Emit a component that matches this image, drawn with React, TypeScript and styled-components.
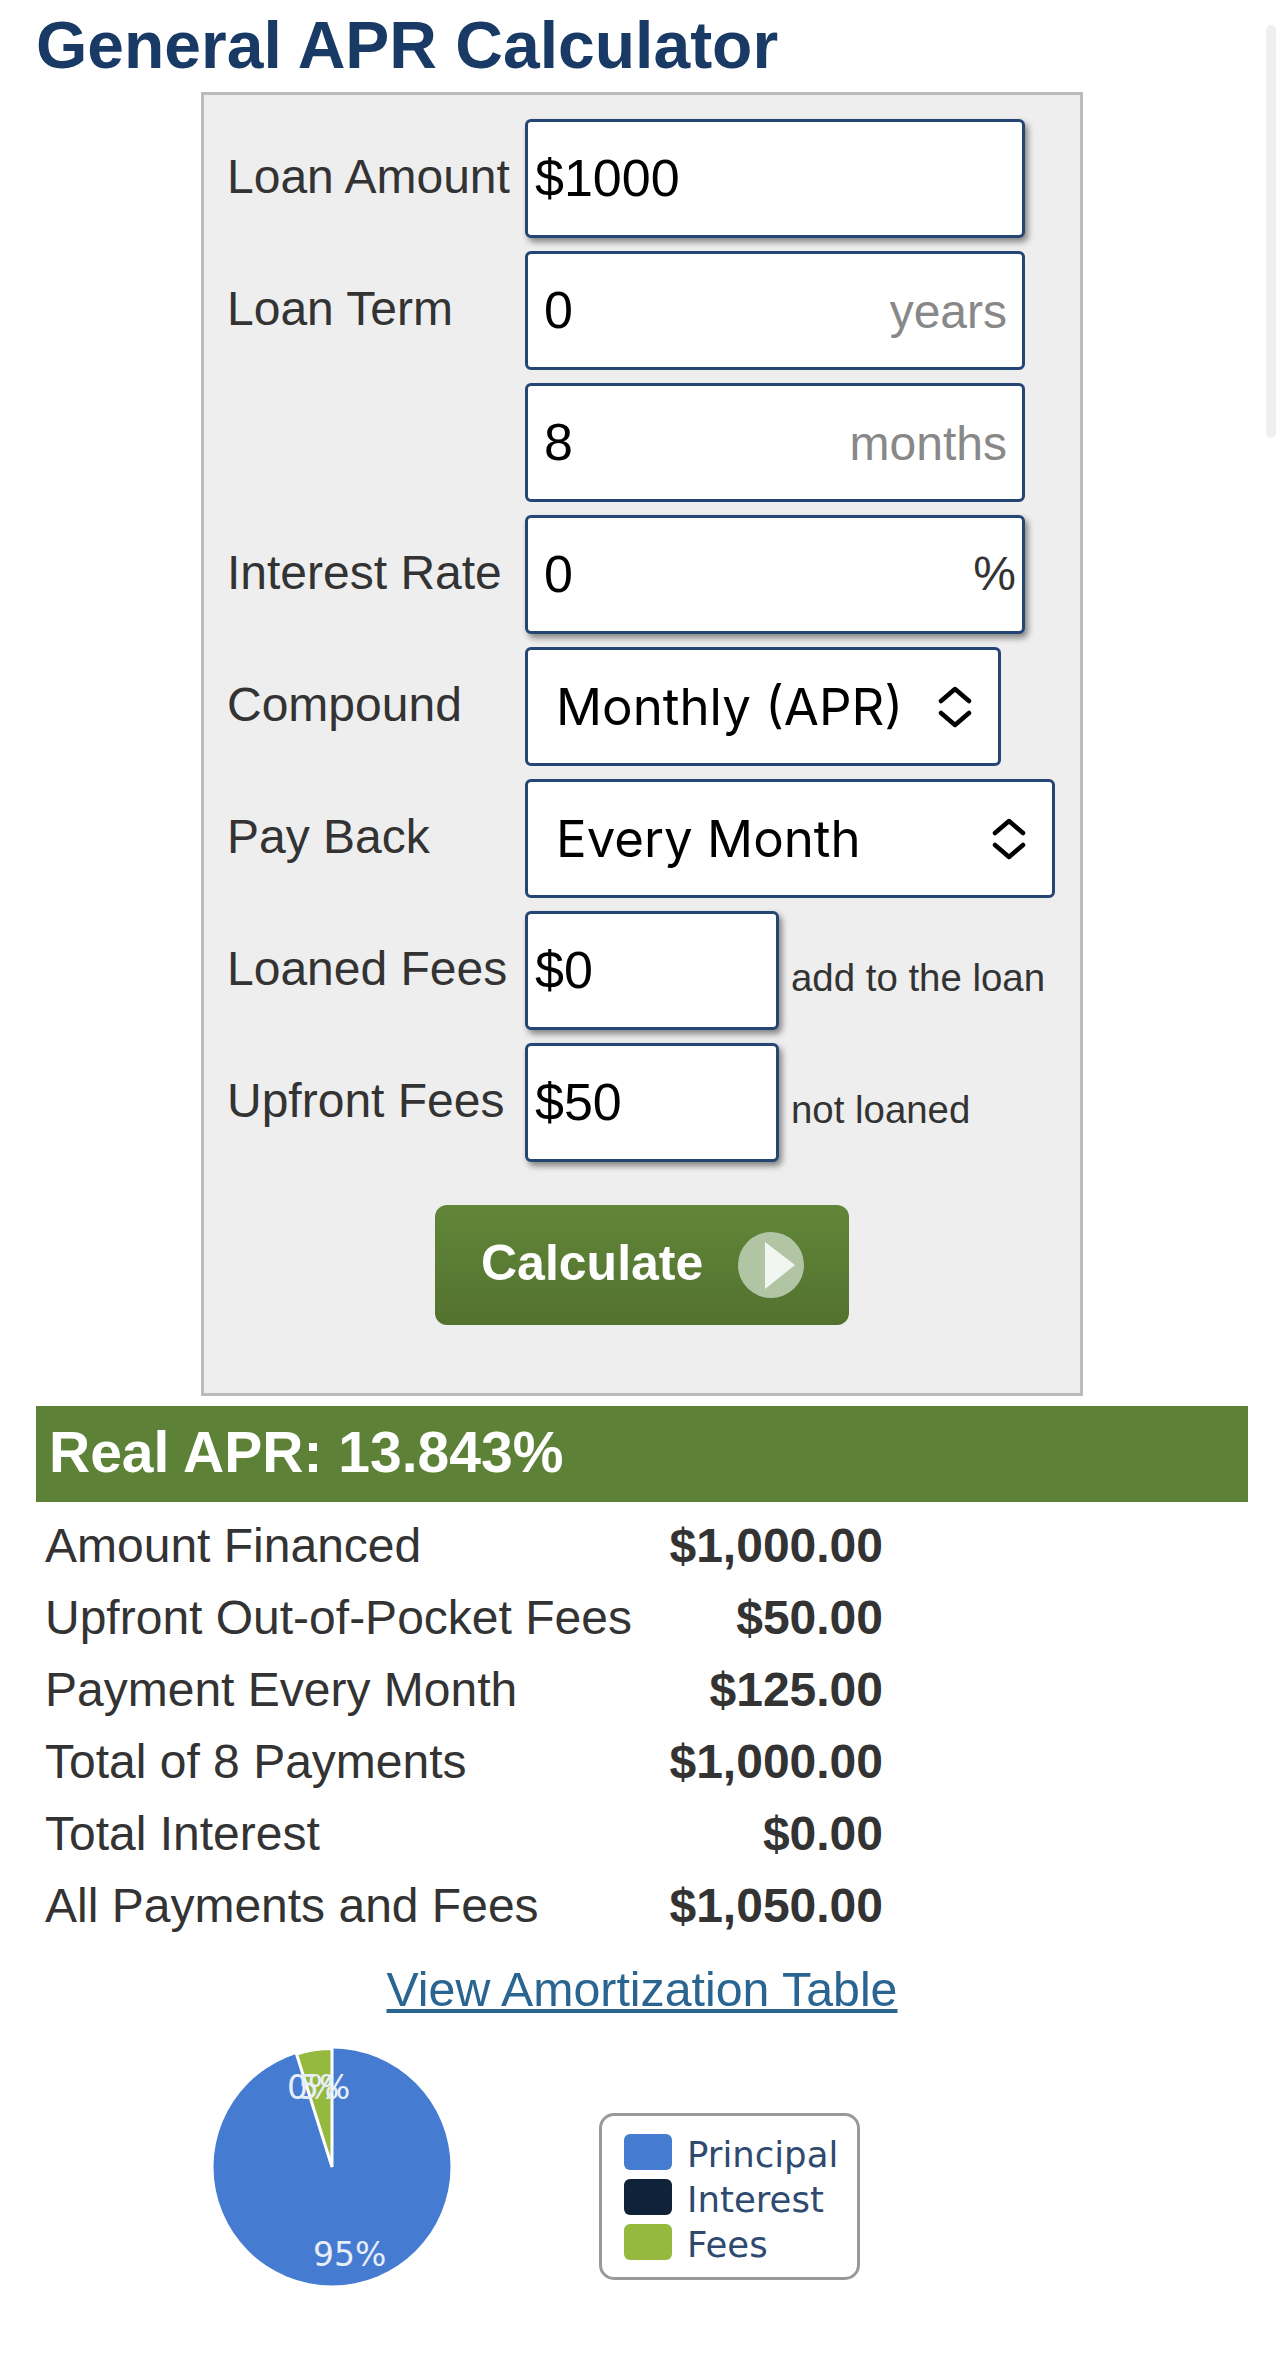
import styled, { createGlobalStyle } from "styled-components";

const GlobalStyle = createGlobalStyle`
  html, body {
    margin: 0;
    padding: 0;
    background: #fff;
    overflow: hidden;
  }
  body {
    font-family: "Liberation Sans", Arial, sans-serif;
    color: #333;
  }
`;

const PageWrap = styled.div`
  position: relative;
  width: 1284px;
  height: 2358px;
  padding: 0 36px;
  box-sizing: border-box;
  overflow: hidden;
`;

const ScrollThumb = styled.div`
  position: absolute;
  top: 25px;
  right: 8px;
  width: 10px;
  height: 413px;
  border-radius: 5px;
  background: #efefef;
`;

const Title = styled.h1`
  margin: 0;
  height: 92px;
  line-height: 90px;
  font-size: 66px;
  font-weight: 700;
  color: #1a3a66;
  white-space: nowrap;
`;

const Panel = styled.div`
  width: 882px;
  height: 1304px;
  margin: 0 0 0 165px;
  box-sizing: border-box;
  padding: 24px 0 0 23px;
  background: #eee;
  border: 3px solid #bbb;
`;

const FormRows = styled.div`
  display: flex;
  flex-direction: column;
  gap: 13px;
`;

const Row = styled.div`
  display: flex;
  align-items: center;
  height: 119px;
`;

const Label = styled.div`
  width: 298px;
  margin-top: -3px;
  flex: none;
  font-size: 48px;
  line-height: 60px;
  color: #333;
`;

const Field = styled.div<{ $w: number; $shadow?: boolean }>`
  width: ${(p) => p.$w}px;
  height: 119px;
  box-sizing: border-box;
  flex: none;
  display: flex;
  align-items: center;
  justify-content: space-between;
  padding: 0 7px 2px 7px;
  background: #fff;
  border: 3px solid #254574;
  border-radius: 6px;
  font-size: 52px;
  color: #000;
  box-shadow: ${(p) => (p.$shadow ? "3px 4px 6px rgba(0, 0, 0, 0.45)" : "none")};
`;

const PlainNumber = styled.span`
  margin-left: 9px;
`;

const Suffix = styled.span<{ $dark?: boolean }>`
  font-size: 48px;
  color: ${(p) => (p.$dark ? "#333" : "#888")};
  margin-right: ${(p) => (p.$dark ? "-1px" : "8px")};
  padding-top: ${(p) => (p.$dark ? "0" : "4px")};
`;

const SelectBox = styled.div<{ $w: number }>`
  width: ${(p) => p.$w}px;
  height: 119px;
  box-sizing: border-box;
  flex: none;
  display: flex;
  align-items: center;
  justify-content: space-between;
  padding: 0 26px 0 28px;
  background: #fff;
  border: 3px solid #254574;
  border-radius: 6px;
  font-family: Inter, "Liberation Sans", sans-serif;
  font-size: 51px;
  color: #000;
`;

const Chevrons = styled.svg`
  width: 34px;
  height: 42px;
  flex: none;
`;

const Hint = styled.div`
  margin-left: 12px;
  padding-top: 14px;
  font-size: 38.4px;
  color: #333;
  white-space: nowrap;
`;

const ButtonRow = styled.div`
  display: flex;
  padding: 43px 0 0 208px;
`;

const CalcButton = styled.div`
  width: 414px;
  height: 120px;
  box-sizing: border-box;
  display: flex;
  align-items: center;
  padding-left: 46px;
  border-radius: 12px;
  background: linear-gradient(#618638, #53722f);
  color: #fff;
  font-size: 50px;
  font-weight: 700;
`;

const CalcLabel = styled.span`
  margin-top: -5px;
`;

const PlayIcon = styled.svg`
  width: 66px;
  height: 66px;
  margin-left: 35px;
  flex: none;
`;

const ResultBar = styled.div`
  height: 96px;
  margin-top: 10px;
  padding-left: 13px;
  background: #5d8136;
  color: #fff;
  font-size: 57px;
  font-weight: 700;
  line-height: 92px;
`;

const ResultTable = styled.div`
  width: 838px;
  margin-top: 8px;
  padding-left: 9px;
`;

const ResultRow = styled.div`
  display: flex;
  justify-content: space-between;
  height: 72px;
  line-height: 72px;
  font-size: 48px;
  color: #333;
`;

const Amount = styled.span`
  font-weight: 700;
`;

const LinkRow = styled.div`
  text-align: center;
  margin-top: 11px;
  height: 72px;
  line-height: 72px;
`;

const TableLink = styled.a`
  font-size: 48.3px;
  color: #2a6592;
  text-decoration: underline;
`;

const ChartRow = styled.div`
  display: flex;
  align-items: flex-start;
  margin-top: 15px;
`;

const PieChart = styled.svg`
  width: 320px;
  height: 260px;
  margin-left: 136px;
  flex: none;
`;

const PieLabel = styled.text`
  font-family: "DejaVu Sans", sans-serif;
  font-size: 33px;
  fill: #e8eef8;
`;

const Legend = styled.div`
  margin: 73px 0 0 107px;
  width: 261px;
  height: 167px;
  box-sizing: border-box;
  padding: 18px 0 0 22px;
  display: flex;
  flex-direction: column;
  gap: 9px;
  border: 3px solid #999;
  border-radius: 15px;
`;

const LegendItem = styled.div`
  display: flex;
  align-items: center;
  gap: 15px;
  height: 36px;
  font-family: "DejaVu Sans", sans-serif;
  font-size: 35.5px;
  color: #2f4a70;
`;

const LegendName = styled.span`
  padding-top: 5px;
`;

const Swatch = styled.span<{ $color: string }>`
  width: 48px;
  height: 36px;
  border-radius: 6px;
  background: ${(p) => p.$color};
  flex: none;
`;

const results = [
  ["Amount Financed", "$1,000.00"],
  ["Upfront Out-of-Pocket Fees", "$50.00"],
  ["Payment Every Month", "$125.00"],
  ["Total of 8 Payments", "$1,000.00"],
  ["Total Interest", "$0.00"],
  ["All Payments and Fees", "$1,050.00"],
];

const legend = [
  ["Principal", "#467bd2"],
  ["Interest", "#10223a"],
  ["Fees", "#95b93f"],
];

const SelectArrows = () => (
  <Chevrons viewBox="0 0 34 42" fill="none" stroke="#000" strokeWidth="4.5" strokeLinecap="round" strokeLinejoin="round">
    <path d="M3 15 L17 3 L31 15" />
    <path d="M3 27 L17 39 L31 27" />
  </Chevrons>
);

export default function App() {
  return (
    <PageWrap>
      <GlobalStyle />
      <ScrollThumb />
      <Title>General APR Calculator</Title>
      <Panel>
        <FormRows>
          <Row>
            <Label>Loan Amount</Label>
            <Field $w={500} $shadow>
              <span>$1000</span>
            </Field>
          </Row>
          <Row>
            <Label>Loan Term</Label>
            <Field $w={500}>
              <PlainNumber>0</PlainNumber>
              <Suffix>years</Suffix>
            </Field>
          </Row>
          <Row>
            <Label />
            <Field $w={500}>
              <PlainNumber>8</PlainNumber>
              <Suffix>months</Suffix>
            </Field>
          </Row>
          <Row>
            <Label>Interest Rate</Label>
            <Field $w={500} $shadow>
              <PlainNumber>0</PlainNumber>
              <Suffix $dark>%</Suffix>
            </Field>
          </Row>
          <Row>
            <Label>Compound</Label>
            <SelectBox $w={476}>
              <span>Monthly (APR)</span>
              <SelectArrows />
            </SelectBox>
          </Row>
          <Row>
            <Label>Pay Back</Label>
            <SelectBox $w={530}>
              <span>Every Month</span>
              <SelectArrows />
            </SelectBox>
          </Row>
          <Row>
            <Label>Loaned Fees</Label>
            <Field $w={254} $shadow>
              <span>$0</span>
            </Field>
            <Hint>add to the loan</Hint>
          </Row>
          <Row>
            <Label>Upfront Fees</Label>
            <Field $w={254} $shadow>
              <span>$50</span>
            </Field>
            <Hint>not loaned</Hint>
          </Row>
        </FormRows>
        <ButtonRow>
          <CalcButton>
            <CalcLabel>Calculate</CalcLabel>
            <PlayIcon viewBox="0 0 66 66">
              <circle cx="33" cy="33" r="33" fill="#b1c5a5" />
              <path d="M27 10 L57 33 L27 57 Z" fill="#f2f6f0" />
            </PlayIcon>
          </CalcButton>
        </ButtonRow>
      </Panel>
      <ResultBar>Real APR: 13.843%</ResultBar>
      <ResultTable>
        {results.map(([name, value]) => (
          <ResultRow key={name}>
            <span>{name}</span>
            <Amount>{value}</Amount>
          </ResultRow>
        ))}
      </ResultTable>
      <LinkRow>
        <TableLink href="#">View Amortization Table</TableLink>
      </LinkRow>
      <ChartRow>
        <PieChart viewBox="0 0 320 260">
          <circle cx="160" cy="127" r="118.5" fill="#467bd2" />
          <path d="M160 127 L160 8.5 A118.5 118.5 0 0 0 124.5 14 Z" fill="#95b93f" stroke="#fff" strokeWidth="3" />
          <PieLabel x="115" y="59">0%</PieLabel>
          <PieLabel x="126" y="59">5%</PieLabel>
          <PieLabel x="141" y="226">95%</PieLabel>
        </PieChart>
        <Legend>
          {legend.map(([name, color]) => (
            <LegendItem key={name}>
              <Swatch $color={color} />
              <LegendName>{name}</LegendName>
            </LegendItem>
          ))}
        </Legend>
      </ChartRow>
    </PageWrap>
  );
}
